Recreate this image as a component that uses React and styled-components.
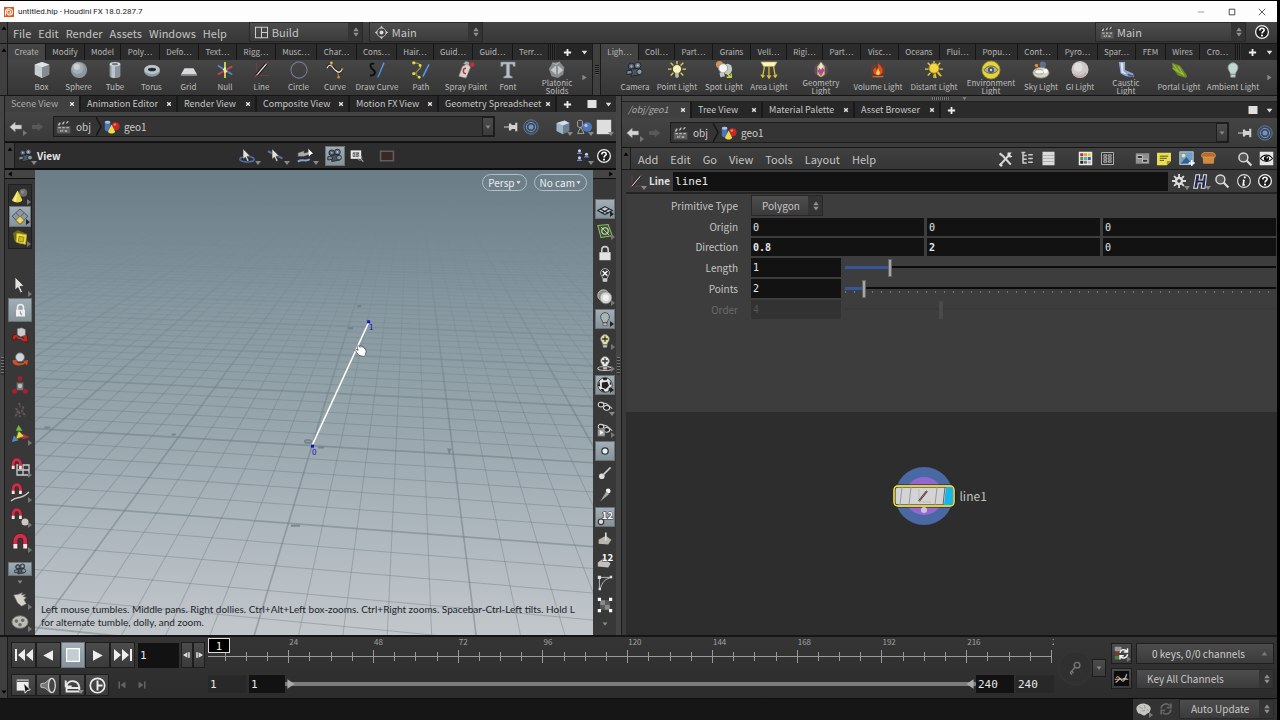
import React from "react";
import styled, { createGlobalStyle, css } from "styled-components";

const ui = `"Noto Sans CJK SC", "Noto Sans", sans-serif`;
const mono = `"DejaVu Sans Mono", "Liberation Mono", monospace`;

const Global = createGlobalStyle`
  *, *::before, *::after { box-sizing: border-box; }
  body { margin: 0; background: #000; }
  button, input, select { font: inherit; color: inherit; margin: 0; padding: 0; border: 0; border-radius: 0; background: none; }
  button, select { cursor: pointer; }
  svg { display: block; }
`;

/* ---------- icons ---------- */

const magnet = (
  <>
    <path d="M4 14V8a4.500 4.500 0 0 1 9 0v6" fill="none" stroke="#5e1420" strokeWidth="5" />
    <path d="M4 12V8a4.500 4.500 0 0 1 9 0v4" fill="none" stroke="#c8304c" strokeWidth="3.600" />
    <path d="M2.200 11h3.600v4H2.200zM11.200 11h3.600v4h-3.600z" fill="#f0e8e8" />
  </>
);
const bulb = (fill, line = "#333") => (
  <>
    <path d="M10 2a5.500 5.500 0 0 0-5.500 5.500C4.500 10.500 7 11.500 7.200 14.500h5.600c.2-3 2.700-4 2.700-7A5.500 5.500 0 0 0 10 2z" fill={fill} stroke={line} />
    <path d="M7.500 15h5v3h-5z" fill="#ccc" stroke={line} strokeWidth=".8" />
  </>
);
const cones = (
  <>
    <path d="M1 4v9c0 3 7 3 7 0V4z" fill="#4a76b8" />
    <ellipse cx="4.500" cy="4" rx="3.500" ry="1.800" fill="#a6c4ea" />
    <circle cx="14.500" cy="9" r="5" fill="#c22a22" />
    <circle cx="13.500" cy="7" r="1.800" fill="#ec7768" />
    <path d="M9.500 7L5 16c1 3 8 3 9 0z" fill="#f2d94c" />
  </>
);
const clapper = (
  <>
    <path d="M1 9h17v9H1z" fill="#5c5c5c" />
    <path d="M1 8V5l16-3 .6 2.400z" fill="#3a3a3a" />
    <path d="M2 8l2-3.500 2 .1L4.500 8zM7 7l2-3.500 2-.3L9.500 6.600zM12 6l2-3.300 2-.3-1.500 3zM3 10h3v1.500H3zM8 10h3v1.500H8zM13 10h3v1.500h-3z" fill="#bbb" />
    <path d="M5 14h2v2H5zM8 13h1v3H8zM11 14h3v2h-3z" fill="#bbb" />
  </>
);
const camera = (
  <>
    <circle cx="6" cy="6" r="3.600" fill="#55606c" stroke="#1c2026" />
    <circle cx="13" cy="5" r="3.600" fill="#6b7682" stroke="#1c2026" />
    <path d="M5 9l10-1 1 7-10 2z" fill="#4a545e" stroke="#1c2026" />
    <circle cx="15" cy="12" r="3" fill="#8b97a4" stroke="#1c2026" />
    <path d="M6 10l-5 1v4l6-1z" fill="#7d8994" stroke="#1c2026" />
    <circle cx="6" cy="6" r="1.200" fill="#aab4be" /><circle cx="13" cy="5" r="1.200" fill="#c2cad2" />
  </>
);
const redHandles = (
  <>
    <path d="M2 10l4-1 3 3-4 2 1 2-5-1zM18 10l-3-2-3 3 2 3-1 3 6 1z" fill="#b82a22" stroke="#5c120e" />
    <path d="M7 13l5 1 3 3" stroke="#d23a30" strokeWidth="1.500" fill="none" />
  </>
);
const help = (
  <>
    <circle cx="10" cy="10" r="8" fill="#1e1e1e" stroke="#ececec" strokeWidth="1.600" />
    <path d="M7.300 8c0-3.600 5.600-3.400 5.400-.3-.1 1.900-2.700 2-2.700 4.200" fill="none" stroke="#fff" strokeWidth="2" />
    <circle cx="10" cy="14.500" r="1.300" fill="#fff" />
  </>
);
const target = (
  <>
    <circle cx="10" cy="10" r="9" fill="#37485f" stroke="#6f819e" />
    <circle cx="10" cy="10" r="5.800" fill="none" stroke="#8298b8" strokeWidth="1.200" />
    <circle cx="10" cy="10" r="2.600" fill="#6d90c4" stroke="#92a8c8" />
  </>
);
const search = (
  <>
    <circle cx="8" cy="8" r="5.600" fill="#565656" stroke="#ddd" strokeWidth="1.800" />
    <path d="M12 12l6 6" stroke="#ddd" strokeWidth="2.600" />
  </>
);
const cursor = <path d="M5 1l9 9-4 .5 2.500 5.500-2 1L8 11.500 5 14z" fill="#e2e2de" stroke="#333" strokeWidth=".8" />;
const lineTool = (
  <>
    <path d="M4 2v14h14" stroke="#7e3c44" fill="none" />
    <path d="M4 16L15 3" stroke="#111" strokeWidth="3.600" />
    <path d="M4 16L15 3" stroke="#e6dada" strokeWidth="1.500" />
    <path d="M2 18l3-4M14 4l3-3" stroke="#b34650" />
  </>
);
const specs = (
  <>
    <ellipse cx="5" cy="7" rx="3.500" ry="3" fill="#222" stroke="#ddd" strokeWidth="1.300" />
    <ellipse cx="12" cy="11" rx="3.800" ry="3" fill="#222" stroke="#ddd" strokeWidth="1.300" />
    <path d="M3 4l9 2 7 6M8 8l1 1" stroke="#ccc" fill="none" strokeWidth="1.300" />
  </>
);
const rays = <path d="M10 0v4M10 15v4M0 9h4M16 9h4M3 2l3 3M17 2l-3 3M3 16l3-3M17 16l-3-3" stroke="#d8cf58" strokeWidth="1.500" />;
const T12 = ({ x, y }) => (
  <text x={x} y={y} fontFamily={ui} fontWeight="700" fontSize="12" fill="#fff" stroke="#333" strokeWidth="1.500" paintOrder="stroke">12</text>
);

const art = {
  box: <><path d="M2 4l8-3 8 3v11l-8 4-8-4z" fill="#a9b0b5" /><path d="M2 4l8 3v12l-8-4z" fill="#c6ccd0" /><path d="M10 7l8-3v11l-8 4z" fill="#848b91" /><path d="M2 4l8-3 8 3-8 3z" fill="#e0e4e7" /></>,
  sphere: <><circle cx="10" cy="10" r="9" fill="#8d969d" /><circle cx="8.500" cy="8" r="6.500" fill="#a5aeb4" /><circle cx="7.500" cy="6.500" r="3.500" fill="#c8ced2" /></>,
  tube: <><path d="M4 3v13c0 4 12 4 12 0V3z" fill="#8b969e" /><path d="M6 4v14q2 1 4 1V4z" fill="#bcc5cb" /><ellipse cx="10" cy="3.500" rx="6" ry="2.500" fill="#d4dade" /><ellipse cx="10" cy="3.500" rx="3.500" ry="1.300" fill="#6d7880" /></>,
  torus: <><ellipse cx="10" cy="11" rx="9" ry="6.500" fill="#8e9ba4" /><ellipse cx="10" cy="9.500" rx="8.500" ry="5" fill="#b9c4ca" /><ellipse cx="10" cy="9.500" rx="4.500" ry="2" fill="#23292d" /></>,
  grid: <><path d="M5 8h10l4 7H1z" fill="#d8dadb" /><path d="M1 15h18v1.500H1z" fill="#8d9295" /></>,
  null: <><path d="M10 1v18" stroke="#d5d84a" strokeWidth="2" /><path d="M2 5l16 10" stroke="#4f86c8" strokeWidth="2.200" /><path d="M18 6L2 15" stroke="#c84440" strokeWidth="2.200" /><path d="M10 7v6M8 9l4 3" stroke="#eef0a0" strokeWidth="2" /></>,
  line: lineTool,
  circle: <circle cx="10" cy="10" r="9" fill="none" stroke="#747c90" strokeWidth="1.200" />,
  curve: <><path d="M1 8c4-8 6 0 9 2s5 5 8-1" fill="none" stroke="#171717" strokeWidth="3" /><path d="M1 8c4-8 6 0 9 2s5 5 8-1" fill="none" stroke="#e9e2cf" strokeWidth="1.500" /><path d="M6 2l1 5M14 18l-1-6" stroke="#b88a3a" /><circle cx="6" cy="2" r="1.500" fill="#d8c14a" /><circle cx="14" cy="18" r="1.500" fill="#d8804a" /><circle cx="18" cy="9" r="1.300" fill="#b88a3a" /></>,
  drawcurve: <><path d="M7 3C0 2 3 8 6 10s2 7-4 6" fill="none" stroke="#0c0c0c" strokeWidth="2" /><path d="M10 18L17 1l2 1-7 16-3 1z" fill="#6f9cd4" stroke="#2d4a73" strokeWidth=".8" /></>,
  path: <><path d="M2 2c9 0 9 5 5 8s-3 6 0 7" fill="none" stroke="#928c4c" strokeWidth="1.400" /><circle cx="2" cy="2" r="1.800" fill="#e4dd38" /><circle cx="9" cy="5" r="1.600" fill="#e4dd38" /><circle cx="2" cy="14" r="1.800" fill="#e4dd38" /><circle cx="8" cy="18" r="1.600" fill="#e4dd38" /><path d="M11 17L18 3l2 1-7 14z" fill="#6f9cd4" stroke="#2d4a73" strokeWidth=".8" /></>,
  spray: <><path d="M6 6l6-3 3 4-5 12-8-2z" fill="#d9d2cc" stroke="#888" strokeWidth=".6" /><path d="M10 8a3 3 0 1 0 0 6" fill="none" stroke="#c63038" strokeWidth="1.600" /><path d="M7 3l3-3 4 2-2 3z" fill="#a8adb0" /><circle cx="17" cy="4" r="2.600" fill="#d02a3a" /></>,
  font: <path d="M2 1h16v5h-2l-1-2.500h-3V16l3 1.500V19H5v-1.500L8 16V3.500H5L4 6H2z" fill="#b6bfc8" stroke="#69737c" strokeWidth=".6" />,
  platonic: <><path d="M5 2l8-1 5 6-1 8-6 4-7-2-3-8z" fill="#888c8f" /><path d="M9 5l-6 5 6 5zM11 5v10l6-5z" fill="#c6c9ca" /><path d="M5 2l4 2 4-3" stroke="#bbb" fill="none" /></>,
  camera,
  pointlight: <>{rays}<circle cx="10" cy="9" r="4.600" fill="#fbf3b4" /><path d="M8 13h4v5H8z" fill="#b8b8a8" /></>,
  spotlight: <><circle cx="5" cy="4" r="4" fill="#d88e54" /><ellipse cx="14" cy="9" rx="5" ry="6" fill="#c4c8ca" /><circle cx="9" cy="8" r="5" fill="#f5f5ee" stroke="#8f9496" /><path d="M5 13l5-1 1 5-5 1z" fill="#c2c5c6" /><path d="M13 13l4 5M18 14v4h-5" stroke="#c9d83c" strokeWidth="1.600" fill="none" /></>,
  arealight: <><path d="M1 1h18l-3 5H4z" fill="#fdf4c0" stroke="#b8a55e" strokeWidth=".7" /><path d="M5 6L3 17M10 6v12M15 6l2 11M1 15l2 3 2-2M8 16l2 3 2-3M15 16l2 2 2-3" stroke="#d8c338" fill="none" strokeWidth="1.400" /></>,
  geolight: <><circle cx="10" cy="10" r="8" fill="#75557b" opacity=".5" /><path d="M10 1l4 5v9l-4 3-4-3V6z" fill="#d8c86c" /><path d="M10 6l4 4-4 7-4-6z" fill="#b04a94" /><path d="M10 1l2 5-2 4-2-3z" fill="#e4e9ee" /></>,
  volumelight: <><circle cx="10" cy="11" r="8" fill="#8b3a20" opacity=".5" /><path d="M10 1c1 4 6 6 5 11 0 5-10 5-10 0-1-3 1-3 2-5 1 1 1 2 1 3 2-2 3-5 2-9z" fill="#e44f1c" /><path d="M10 8c1 3 2 3 2 6 0 2-4 2-4 0 0-3 2-3 2-6z" fill="#fbd75c" /><path d="M4 17h12v1H4z" fill="#f08050" /></>,
  distant: <>{rays}<circle cx="10" cy="8" r="5.500" fill="#f3d544" stroke="#b98d1c" /><path d="M11 14l1 5M14 12l4 5" stroke="#e3bd2a" strokeWidth="2" /></>,
  env: <><circle cx="10" cy="10" r="10" fill="#e4d43c" stroke="#998e22" /><path d="M2 10c4-6 12-6 16 0-4 5-12 5-16 0z" fill="#aeb0a2" stroke="#61603a" /><circle cx="10" cy="10" r="3.400" fill="#4b5358" /><circle cx="10" cy="10" r="1.400" fill="#d0d4d4" /></>,
  sky: <><circle cx="12" cy="4" r="3.500" fill="#5b7288" /><ellipse cx="10" cy="13" rx="9" ry="6" fill="#d5d3c6" stroke="#8d8b76" /><ellipse cx="8" cy="12" rx="5" ry="2.500" fill="#f6f4e2" stroke="#999" /><circle cx="5" cy="5" r="2" fill="#e08a2a" /><circle cx="15" cy="11" r="2.500" fill="#fafafa" /></>,
  gi: <><circle cx="10" cy="9.500" r="9.500" fill="#cbc8c6" /><circle cx="8" cy="7" r="5" fill="#e0dfde" /><path d="M3 15c5 4 11 2 14-2" stroke="#c7a8a5" strokeWidth="2" fill="none" /></>,
  caustic: <><path d="M2 1h7v9l9 4 1 4-9-1-6-3z" fill="#8fa6cf" /><path d="M4 2h3v9l4 4-6-2z" fill="#dbe5f5" /><path d="M12 15l6 2" stroke="#40567d" strokeWidth="2" /></>,
  portal: <><path d="M2 2l9 3 8 11-1 3-9-3-6-8z" fill="#6d8a28" /><path d="M4 4l5 7M9 6l6 9M3 8l13 8" stroke="#9db93e" strokeWidth="1.400" /></>,
  ambient: bulb("#c3d6d2", "#8a9a98"),
  build: <path d="M2 3h16v14H2zM10 3v14M10 10h8" fill="none" stroke="#ccc" strokeWidth="1.400" />,
  radial: <><circle cx="10" cy="10" r="6" fill="none" stroke="#bbb" strokeWidth="1.300" /><circle cx="10" cy="10" r="2.600" fill="#ddd" /><path d="M10 1l2 3H8zM10 19l2-3H8zM1 10l3-2v4zM19 10l-3-2v4z" fill="#ccc" /></>,
  clapper, cones, help, target, search, cursor,
  back: <path d="M1 10l8-7v4h9v6H9v4z" fill="#d4d4d0" stroke="#777" strokeWidth=".7" />,
  fwd: <path d="M19 10l-8-6v3H3v6h8v3z" fill="#585858" />,
  pin: <path d="M0 9.300h7V5h3l1 2h5V4h3v12h-3v-3h-5l-1 2H7v-4.300H0z" fill="#d0d0d0" />,
  cubeBlue: <><path d="M2 5l10-3 6 3v10l-8 4-8-4z" fill="#6d7f90" /><path d="M2 5l8 3v11l-8-4z" fill="#9fb2c4" /><path d="M2 5l10-3 6 3-8 3z" fill="#d2dee8" /></>,
  ghost: <><circle cx="14" cy="10" r="6" fill="#4f78b8" /><circle cx="12.500" cy="8" r="2" fill="#a8c2ea" /><path d="M2 3v6c0 2 6 2 6 0V3c0-2-6-2-6 0zM2 18l4-8 4 8z" fill="none" stroke="#a9a9a9" strokeWidth="1.200" /></>,
  white: <path d="M1 1h18v18H1z" fill="#dedede" />,
  orbit: <><ellipse cx="10" cy="14" rx="9" ry="3.500" fill="none" stroke="#5472ac" strokeWidth="1.800" />{cursor}</>,
  move: <><path d="M0 4l18 9" stroke="#5472ac" strokeWidth="2.600" />{cursor}</>,
  dolly: <><path d="M1 6l8-3v3l8-2v4l-9 3H1z" fill="#aaa" stroke="#333" /><path d="M1 17c6-4 10 1 15-3" stroke="#87a4d8" strokeWidth="2.400" fill="none" /><path d="M14 1l6 6-3 1-2 3z" fill="#fff" /></>,
  zoomWin: <><path d="M1 2h15v12H1z" fill="#ececec" /><path d="M4 5h9v6H4z" fill="#333" /><path d="M5 7h7v2H5zM8 5v6" stroke="#ddd" fill="none" /><circle cx="14" cy="13" r="3" fill="none" stroke="#bbb" /><path d="M16 15l3 3" stroke="#bbb" strokeWidth="1.500" /></>,
  frame: <path d="M2 4h16v12H2z" fill="#3a2826" stroke="#5e5e5e" strokeWidth="2" />,
  people: (
    <>
      <circle cx="5" cy="2.500" r="2.200" fill="#c4d2ee" /><path d="M1 7c1-3 7-3 8 0z" fill="#6a86c4" />
      <circle cx="5" cy="12.500" r="2.200" fill="#c4d2ee" /><path d="M1 17c1-3 7-3 8 0z" fill="#6a86c4" />
      <circle cx="15" cy="7.500" r="2.200" fill="#c4d2ee" /><path d="M11 12c1-3 7-3 8 0z" fill="#6a86c4" />
    </>
  ),
  tools: <><path d="M3 17L14 5M2 3l4 3 10 11" stroke="#d6d6d6" strokeWidth="2.600" fill="none" /><path d="M12 2l5 0-2 3 3 2c-4 3-7 0-6-5z" fill="#e2e2e2" /><path d="M2 16l3 3" stroke="#ddd" strokeWidth="3" /></>,
  tree: <path d="M4 2v14h5M4 6h5M4 11h5M11 5h6M11 10h6M11 15h6M2 2h5" fill="none" stroke="#ccc" strokeWidth="2" />,
  rows: <><path d="M2 1h16v18H2z" fill="#dcdcdc" /><path d="M2 6h16M2 10h16M2 14h16" stroke="#a6a6a6" /></>,
  palette: <><path d="M1 1h18v18H1z" fill="#eee" /><path d="M3 3h4v4H3z" fill="#b02c30" /><path d="M8 3h4v4H8z" fill="#e0a428" /><path d="M13 3h4v4h-4z" fill="#d5cf3a" /><path d="M3 8h4v4H3z" fill="#4b9440" /><path d="M8 8h4v4H8z" fill="#56aad0" /><path d="M13 8h4v4h-4z" fill="#4454a8" /><path d="M3 13h4v4H3z" fill="#222" /><path d="M8 13h4v4H8z" fill="#777" /><path d="M13 13h4v4h-4z" fill="#b8b8b8" /></>,
  gridlist: <path d="M2 2h16v16H2zM5 5h4v2H5zM11 5h4v2h-4zM5 9h4v2H5zM11 9h4v2h-4zM5 13h4v2H5zM11 13h4v2h-4z" fill="#333" stroke="#bdbdbd" strokeWidth="1.200" />,
  netbox: <><path d="M1 3h18v14H1z" fill="#8f8f8f" /><path d="M3 6h7v4H3zM10 11h7v4h-7z" fill="#333" stroke="#ddd" /></>,
  note: <><path d="M0 1h20v12l-6 6H0z" fill="#e8df54" /><path d="M4 6h12M4 9h10M4 12h6" stroke="#4e4a18" strokeWidth="1.300" /><path d="M14 19v-6h6z" fill="#a39b2c" /></>,
  image: <><path d="M1 1h18v17H1z" fill="#6ea0cc" stroke="#d8d8d8" /><circle cx="6" cy="6" r="2.500" fill="#f2e28c" /><path d="M2 17l8-9 6 8z" fill="#35618c" /><path d="M17 12v8M13 16h8" stroke="#fff" strokeWidth="2" /></>,
  basket: <><path d="M2 7h16l-1 10H3z" fill="#d08a3e" /><path d="M1 4l3-2h12l3 2v4H1z" fill="#b56c2c" stroke="#e0a868" strokeWidth=".8" /></>,
  eye: <><path d="M1 1h18v18H1z" fill="#e6e6e6" /><path d="M2 10c4-6 12-6 16 0-4 5-12 5-16 0z" fill="#fff" stroke="#111" strokeWidth="1.500" /><circle cx="10" cy="10" r="3.500" fill="#111" /><circle cx="11" cy="9" r="1" fill="#fff" /></>,
  gear: <><path d="M10 0v20M0 10h20M3 3l14 14M17 3L3 17" stroke="#dcdcdc" strokeWidth="2.600" /><circle cx="10" cy="10" r="6" fill="#dcdcdc" /><circle cx="10" cy="10" r="2.600" fill="#333" /></>,
  hlogo: <path d="M4 1h5L8 8h5l1-7h4l-2 18h-5l1-7H7l-1 7H1z" fill="#20284e" stroke="#e4e4ec" strokeWidth="1.400" />,
  info: <><circle cx="10" cy="10" r="8" fill="#333" stroke="#ddd" strokeWidth="1.400" /><path d="M10 8.500L9 15h2M8.500 9H10" stroke="#fff" strokeWidth="2" fill="none" /><circle cx="11" cy="5.500" r="1.300" fill="#fff" /></>,
  coneSphere: <><circle cx="14" cy="6" r="5" fill="#6e6e6e" /><circle cx="13" cy="5" r="2" fill="#8c8c8c" /><path d="M7 3L0 15c1 4 12 4 13 0z" fill="#e8d64c" /><path d="M7 3L2 16l3 1z" fill="#f8f0a4" /></>,
  diamond: <><path d="M10 0l10 9-10 10L0 9z" fill="#8a96a0" stroke="#444" /><path d="M5 5l9 9M15 5l-9 9" stroke="#555" /><path d="M10 9l5 5-5 5-5-5z" fill="#f0d860" stroke="#7b6b20" /></>,
  yellowBox: <><path d="M1 4l6-4 12 5-1 9-8 4-7-5z" fill="#8a7c14" opacity=".7" /><path d="M6 4l12 2-1 12-12-3z" fill="#efe04a" stroke="#b3a41c" /><path d="M9 8l6 1-1 6-6-1z" fill="#cdb92c" stroke="#877a14" /></>,
  lock: <><path d="M6 10V6a4 4 0 0 1 8 0v4" fill="none" stroke="#eee" strokeWidth="2.200" /><path d="M4 9h12v9H4z" fill="#efefef" /><path d="M10 11v3l2 2" stroke="#999" strokeWidth="1.500" fill="none" /></>,
  handleMove: <>{redHandles}<path d="M7 3l5-1 4 2v6l-5 2-4-2z" fill="#c8ccd0" stroke="#666" strokeWidth=".6" /></>,
  handleRot: <><path d="M2 10c-2 6 8 8 14 4l2 2 1-6-6 1 2 1c-4 3-9 2-9-2z" fill="#d24e28" /><circle cx="10" cy="7" r="5" fill="#cfd4d8" stroke="#666" /></>,
  handleScale: <><path d="M6 7h8v9H6z" fill="#777" stroke="#444" /><circle cx="10" cy="11" r="2.500" fill="#bbb" /><circle cx="10" cy="3" r="2.600" fill="#a81e2a" /><circle cx="4" cy="17" r="2.800" fill="#a81e2a" /><circle cx="16" cy="17" r="2.800" fill="#a81e2a" /></>,
  bones: <path d="M9 2l1 5M5 8l3 3-3 6M14 6l-2 5 4 6M9 12l1 6" stroke="#6a5656" strokeWidth="2" strokeDasharray="3 1" fill="none" />,
  axes: <><path d="M8 0l4 6H5z" fill="#6abf3c" /><path d="M20 13l-8-4v6z" fill="#c4283c" /><path d="M1 18l2-7 5 5z" fill="#4f8ad0" /><path d="M8 6l6 6-9 3z" fill="#e9d84c" stroke="#6f6a28" /></>,
  magGrid: <><path d="M7 8h12v10H7zM13 8v10M7 13h12" fill="none" stroke="#ccc" strokeWidth="1.300" /><g transform="scale(.8)">{magnet}</g></>,
  magCurve: <><path d="M1 19c6-6 9 0 18-9" fill="none" stroke="#ccc" strokeWidth="1.300" /><g transform="scale(.8)">{magnet}</g></>,
  magPoint: <><circle cx="15" cy="15" r="3.500" fill="#ccc8be" /><g transform="scale(.8)">{magnet}</g></>,
  magnet: <g transform="scale(1.150)">{magnet}</g>,
  gloves: <path d="M2 5l6-1 5-2-1 3 5-1-3 3 4 1-3 3 3 5-6 3-5-4-2-4z" fill="#d5d2cb" stroke="#6c6a64" strokeWidth=".8" />,
  film: <><ellipse cx="10" cy="10" rx="9" ry="7" fill="#bdbdb8" stroke="#6f6f6b" /><circle cx="6" cy="9" r="2" fill="#6a6a68" /><circle cx="13" cy="8" r="2" fill="#6a6a68" /><circle cx="10" cy="13" r="2" fill="#6a6a68" /></>,
  refGrid: <><path d="M1 12l9-5 9 5-9 5z" fill="#c6ced2" stroke="#20282c" strokeWidth="1.500" /><path d="M4 10l10 5M6 15l9-5" stroke="#20282c" strokeWidth="1.500" /></>,
  plane: <><path d="M1 3l13-1 5 14-14 2z" fill="#3b5230" stroke="#8cc060" strokeWidth="1.300" /><circle cx="10" cy="10" r="4" fill="none" stroke="#cfe0c8" strokeWidth="1.400" /><path d="M5 5l10 10" stroke="#ddd" /></>,
  padlock: <><path d="M6 9V6a4 4 0 0 1 8 0v3" fill="none" stroke="#ccc" strokeWidth="2" /><path d="M3 9h14v10H3z" fill="#e2e2e0" /></>,
  bulbOff: <>{bulb("#333", "#ccc")}<path d="M7 5l6 6M13 5l-6 6" stroke="#fff" strokeWidth="1.800" /></>,
  discs: <><circle cx="8" cy="8" r="7" fill="#8f8f8d" stroke="#ddd" /><circle cx="11" cy="11" r="7.500" fill="#d2d2ce" stroke="#777" /><circle cx="11" cy="11" r="4" fill="#efefec" /></>,
  bulb: bulb("#a9b5b5", "#3c4446"),
  bulbPlus: <>{bulb("#e4dda0", "#777")}<path d="M10 4v7M6.500 7.500h7" stroke="#333" strokeWidth="1.600" /></>,
  bulbStand: <><ellipse cx="10" cy="17" rx="9" ry="2.500" fill="none" stroke="#ccc" strokeWidth="1.300" />{bulb("#e8e8e4", "#777")}<path d="M10 4v7M6.500 7.500h7" stroke="#333" strokeWidth="1.600" /></>,
  checker: <><circle cx="10" cy="10" r="9" fill="#e6e6e6" stroke="#222" /><path d="M6 7l7-1 2 5-4 4-5-2zM7 1l6 0-1 3H8zM16 4l2 5-2 1zM3 5L1 11l3 1zM4 15l4 0 2 4-3-1zM15 13l3 1-4 4z" fill="#222" /></>,
  specs,
  specsPlay: <>{specs}<path d="M1 10h9v9H1z" fill="#aaa" stroke="#555" /><path d="M4 12l4 2.500L4 17z" fill="#fff" /></>,
  dot: <circle cx="10" cy="10" r="4" fill="#e8f0f6" stroke="#293640" strokeWidth="1.600" />,
  normal: <><circle cx="6" cy="14" r="3.500" fill="#e0e0e0" /><path d="M7 13l10-10" stroke="#ccc" strokeWidth="2" /></>,
  vector: <><circle cx="14" cy="5" r="3" fill="#f2f2f2" /><path d="M12 5l3 4L4 18z" fill="#a8a8a4" /></>,
  pt12: <><circle cx="5" cy="16" r="3.500" fill="#ddd" stroke="#333" strokeWidth="1.500" /><T12 x="6" y="12" /></>,
  primN: <><path d="M2 11l9-5 7 5-4 6-12-1z" fill="#b9b6ae" /><path d="M11 12V2" stroke="#ddd" strokeWidth="2" /></>,
  prim12: <><path d="M1 12l8-6 8 7-3 5-13-1z" fill="#c4c1ba" /><T12 x="6" y="10" /></>,
  corner: <><path d="M3 18V3h15M4 18C6 9 10 5 18 3" fill="none" stroke="#bbb" strokeWidth="1.200" /><path d="M1 1h4v4H1zM16 1h3v3h-3zM2 16h3v3H2z" fill="#ddd" /></>,
  group: <><path d="M4 4h6v6H4zM10 10h6v6h-6z" fill="#8a8a8a" /><path d="M10 4h6v6h-6zM4 10h6v6H4z" fill="#5a5a5a" /><path d="M1 1h4v4H1zM15 1h4v4h-4zM1 15h4v4H1zM15 15h4v4h-4z" fill="#fff" /></>,
  first: <path d="M1 4h2v12H1zM11 4v12L4 10zM19 4v12l-7-6z" fill="#eee" />,
  last: <path d="M19 4h-2v12h2zM9 4v12l7-6zM1 4v12l7-6z" fill="#eee" />,
  rev: <path d="M16 3v14L3 10z" fill="#eee" />,
  stop: <path d="M2 2h16v16H2z" fill="#c2ced2" stroke="#fff" strokeWidth="1.500" />,
  play: <path d="M4 3v14l13-7z" fill="#eee" />,
  stepB: <path d="M11 3v14L0 10zM13 3h4v14h-4z" fill="#ddd" />,
  stepF: <path d="M9 3v14l11-7zM3 3h4v14H3z" fill="#ddd" />,
  nextKey: <path d="M3 3v14l10-7zM14 3h3v14h-3z" fill="#636363" />,
  prevKey: <path d="M17 3v14L7 10zM3 3h3v14H3z" fill="#636363" />,
  winCursor: <><path d="M2 3h14v13H2z" fill="#eee" /><path d="M2 5h14" stroke="#444" strokeWidth="1.500" /><path d="M10 7l8 8-4 1-2 3z" fill="#111" stroke="#fff" /></>,
  speaker: <><path d="M1 8l5-1 6-5v16l-6-5-5-1z" fill="#777" stroke="#ccc" /><ellipse cx="14" cy="10" rx="4" ry="8.500" fill="#444" stroke="#ddd" strokeWidth="1.500" /></>,
  loop: <path d="M3 10c3-8 14-6 15 2M2 4v7h7M3 13v4h15v-4z" fill="none" stroke="#e8e8e8" strokeWidth="2.200" />,
  clock: <><circle cx="10" cy="10" r="8.500" fill="none" stroke="#eee" strokeWidth="2" /><path d="M10 4v12M10 10h6" stroke="#eee" strokeWidth="2.200" fill="none" /></>,
  keyIcon: <><circle cx="13" cy="6" r="4" fill="none" stroke="#777" strokeWidth="2" /><path d="M10 9l-7 8M5 14l3 3M3 17l3 2" stroke="#777" strokeWidth="2" /></>,
  channels: <><path d="M1 1h9v6H1z" fill="#9a9a96" /><path d="M1 8h6v4H1z" fill="#8a3030" /><path d="M1 13h6v5H1z" fill="#4b8040" /><path d="M8 9a5 5 0 0 1 9-2M18 3v5h-5M18 11a5 5 0 0 1-9 3M8 18v-5h5" fill="none" stroke="#f2f2f2" strokeWidth="2" /></>,
  wave: <><path d="M0 0h20v20H0z" fill="#0c0c0c" /><path d="M2 15C5 15 7 8 9 11s4 6 8-7" fill="none" stroke="#7ba6d8" strokeWidth="1.800" /><path d="M1 11h18M3 9c3-4 5 3 8 2s4-3 6 0" fill="none" stroke="#e2b07c" strokeWidth="1.400" /></>,
  brain: <><path d="M2 11c-2-5 4-9 9-8s9 4 7 8c-1 4-3 3-5 5-3 3-5-1-7-1s-3-1-4-4z" fill="#c6c6c2" /><path d="M5 7l4 2M11 5l1 4M8 12l4-1M14 10l2 1" stroke="#90908c" fill="none" /></>,
  refresh: <path d="M3 9a7 7 0 0 1 12-4M17 2v6h-6M17 11a7 7 0 0 1-12 4M3 18v-6h6" fill="none" stroke="#666" strokeWidth="2.400" />,
  logo: <><path d="M0 0h20v20H0z" fill="#d95b1e" /><path d="M3 17V9c1-8 14-7 14 1s-11 8-11 1 7-5 7-1-4 2-4 1" fill="none" stroke="#fff" strokeWidth="2.200" /></>,
  min: <path d="M2 10h16" stroke="#888" strokeWidth="2" />,
  max: <path d="M3 3h14v14H3z" fill="none" stroke="#222" strokeWidth="2" />,
  close: <path d="M2 2l16 16M18 2L2 18" stroke="#333" strokeWidth="2" />,
  x: <path d="M4 4l12 12M16 4L4 16" stroke="#e6e6e6" strokeWidth="4.500" />,
  plus: <path d="M10 2v16M2 10h16" stroke="#eee" strokeWidth="4" />,
  down: <path d="M2 5h16l-8 11z" fill="currentColor" />,
  up: <path d="M2 16h16L10 4z" fill="currentColor" />,
  left: <path d="M16 2v16L4 10z" fill="currentColor" />,
  right: <path d="M4 2v16l12-8z" fill="currentColor" />,
  updown: <path d="M3 8l7-9 7 9zM3 12l7 9 7-9z" fill="#8f8f8f" />,
  pane: <path d="M1 2h18v16H1z" fill="#e0e0e0" />,
};

const Svg = styled.svg`
  flex: none;
  overflow: visible;
  width: ${(p) => p.$s}px;
  height: ${(p) => p.$s}px;
`;
const Icon = ({ n, s = 16 }) => <Svg viewBox="0 0 20 20" $s={s} aria-hidden="true">{art[n]}</Svg>;

/* ---------- shared controls ---------- */

const IconBtn = styled.button`
  position: relative;
  flex: none;
  display: grid;
  place-items: center;
  width: ${(p) => p.$w || 20}px;
  height: ${(p) => p.$h || 20}px;
  color: ${(p) => p.$tint || "#8a8a8a"};
  ${(p) => p.$on && css`background: linear-gradient(#a2aeb6, #87939b); border: 1px solid #69737a;`}
  ${(p) => p.$raised && css`background: linear-gradient(#4c4c4c, #3a3a3a); border: 1px solid #1d1d1d;`}
`;
const More = styled.span`
  position: absolute;
  right: 0;
  bottom: 1px;
  border: 3px solid transparent;
  ${(p) => (p.$down ? css`border-top: 4px solid #888; border-bottom: 0;` : css`border-left: 4px solid ${p.$dark ? "#222" : "#777"}; border-right: 0;`)}
`;
const Tool = ({ n, label, s = 16, more, ...rest }) => (
  <IconBtn type="button" aria-label={label} {...rest}>
    <Icon n={n} s={s} />
    {more && <More $down={more === "down"} $dark={rest.$on} />}
  </IconBtn>
);
const Spacer = styled.div`flex: ${(p) => (p.$w ? `0 0 ${p.$w}px` : "1 1 0")};`;

const Handle = styled.button`
  flex: none;
  width: ${(p) => p.$w || 8}px;
  color: #000;
  background: #3f3f3f;
  border-right: 1px solid #1a1a1a;
  display: flex;
  justify-content: center;
  align-items: ${(p) => (p.$bottom ? "flex-end" : "flex-start")};
  padding: 3px 0;
`;

const Combo = styled.label`
  flex: none;
  display: flex;
  align-items: center;
  gap: ${(p) => p.$gap || 0}px;
  width: ${(p) => p.$w}px;
  height: ${(p) => p.$h || 20}px;
  padding: 0 2px 0 4px;
  background: linear-gradient(90deg, transparent calc(100% - 14px), #343434 calc(100% - 14px)), linear-gradient(#4d4d4d, #3b3b3b);
  border: 1px solid #282828;
  color: #c6c6c6;
  font-size: ${(p) => p.$fs || 11}px;
  select { appearance: none; flex: 1; min-width: 0; line-height: 16px; outline: 0; padding-left: ${(p) => p.$pl || 0}px; }
`;
const ComboBox = ({ icon, value, label, ...rest }) => (
  <Combo {...rest}>
    {icon && <Icon n={icon} s={15} />}
    <select aria-label={label} defaultValue={value}><option>{value}</option></select>
    <Icon n="updown" s={8} />
  </Combo>
);

/* ---------- top chrome ---------- */

const Page = styled.div`
  display: flex;
  flex-direction: column;
  min-height: 100vh;
  padding: 1px 3px 0 0;
  background: #000;
  color: #c4c4c4;
  font-family: ${ui};
  font-size: 11px;
  line-height: 14px;
`;
const TitleBar = styled.header`
  display: flex;
  align-items: center;
  height: 21px;
  padding: 0 0 0 4px;
  gap: 4px;
  background: #fdfdfd;
  color: #222;
  font-family: Roboto, sans-serif;
  font-size: 8px;
`;
const WinButtons = styled.div`
  display: flex;
`;
const MenuBar = styled.nav`
  display: flex;
  align-items: stretch;
  height: 22px;
  background: linear-gradient(#444, #363636);
  border-bottom: 1px solid #181818;
`;
const Menus = styled.div`
  display: flex;
  gap: ${(p) => p.$gap || 0}px;
`;
const MenuItem = styled.button`
  padding: 0 ${(p) => p.$px || 6}px;
  font-size: 11px;
  line-height: 18px;
  color: #c4c4c4;
  white-space: nowrap;
`;
const Shelves = styled.section`
  display: flex;
  background: #363636;
  border-bottom: 1px solid #151515;
`;
const Shelf = styled.div`
  position: relative;
  flex: ${(p) => p.$grow};
  min-width: 0;
  overflow: hidden;
`;
const ShelfTabs = styled.div`
  display: flex;
  height: 16px;
  background: #262626;
`;
const ShelfTab = styled.button`
  flex: 0 0 ${(p) => p.$w}px;
  border-right: 1px solid #151515;
  background: ${(p) => (p.$active ? "#444" : "#2c2c2c")};
  color: #b8b8b8;
  font-size: 8px;
  line-height: 14px;
`;
const Stack = styled.div`
  width: 7px;
  background: repeating-linear-gradient(90deg, #333 0 1px, #161616 1px 2px);
`;
const ShelfTools = styled.div`
  display: flex;
  height: 35px;
  padding-left: ${(p) => p.$pl}px;
  background: linear-gradient(#464646, #353535);
`;
const ShelfTool = styled.button`
  flex: 0 0 ${(p) => p.$w}px;
  display: flex;
  flex-direction: column;
  align-items: center;
  justify-content: flex-start;
  padding-top: 1px;
  color: #bdbdbd;
  font-size: 8px;
  line-height: 8px;
`;
const ToolLabel = styled.span`
  display: flex;
  align-items: center;
  height: 16px;
  text-align: center;
  white-space: pre;
`;
const ShelfMore = styled.span`
  position: absolute;
  right: 4px;
  bottom: 14px;
  color: #8a8a8a;
`;
const Grip = styled.div`
  flex: 0 0 9px;
  background: #3f3f3f;
  border: solid #1a1a1a;
  border-width: 0 1px;
  display: grid;
  place-items: center;
  &::after { content: ""; width: 4px; height: 10px; background: repeating-linear-gradient(#111 0 1px, #555 1px 2px); }
`;

const ShelfSet = ({ grow, tabs, tools, pl }) => (
  <Shelf $grow={grow}>
    <ShelfTabs>
      {tabs.map(([t, w], i) => <ShelfTab key={i} type="button" $w={w} $active={i === 0}>{t}</ShelfTab>)}
      <Stack />
      <Spacer $w={2} />
      <Tool n="plus" s={9} label="Add shelf" $w={18} $h={16} />
      <Tool n="down" s={7} label="Shelf menu" $w={16} $h={16} $tint="#ddd" />
    </ShelfTabs>
    <ShelfTools $pl={pl}>
      {tools.map(([t, n, w]) => (
        <ShelfTool key={t} type="button" $w={w}>
          <Icon n={n} s={18} />
          <ToolLabel>{t}</ToolLabel>
        </ShelfTool>
      ))}
    </ShelfTools>
    <ShelfMore><Icon n="right" s={7} /></ShelfMore>
  </Shelf>
);

const leftTabs = [["Create", 38], ["Modify", 39], ["Model", 36], ["Poly…", 39], ["Defo…", 39], ["Text…", 38], ["Rigg…", 39], ["Musc…", 41], ["Char…", 40], ["Cons…", 40], ["Hair…", 37], ["Guid…", 39], ["Guid…", 40], ["Terr…", 36]];
const leftTools = [["Box", "box", 37], ["Sphere", "sphere", 37], ["Tube", "tube", 36], ["Torus", "torus", 37], ["Grid", "grid", 37], ["Null", "null", 36], ["Line", "line", 37], ["Circle", "circle", 37], ["Curve", "curve", 36], ["Draw Curve", "drawcurve", 48], ["Path", "path", 40], ["Spray Paint", "spray", 50], ["Font", "font", 34], ["Platonic\nSolids", "platonic", 64]];
const rightTabs = [["Ligh…", 38], ["Coll…", 36], ["Part…", 38], ["Grains", 38], ["Vell…", 36], ["Rigi…", 36], ["Part…", 38], ["Visc…", 38], ["Oceans", 41], ["Flui…", 36], ["Popu…", 42], ["Cont…", 40], ["Pyro…", 40], ["Spar…", 38], ["FEM", 30], ["Wires", 34], ["Cro…", 36]];
const rightTools = [["Camera", "camera", 38], ["Point Light", "pointlight", 46], ["Spot Light", "spotlight", 48], ["Area Light", "arealight", 42], ["Geometry\nLight", "geolight", 62], ["Volume Light", "volumelight", 52], ["Distant Light", "distant", 60], ["Environment\nLight", "env", 54], ["Sky Light", "sky", 46], ["GI Light", "gi", 32], ["Caustic\nLight", "caustic", 60], ["Portal Light", "portal", 46], ["Ambient Light", "ambient", 62]];

/* ---------- panes ---------- */

const Workspace = styled.main`
  flex: 1;
  display: flex;
  background: #393939;
`;
const Edge = styled.div`
  flex: 0 0 ${(p) => p.$w}px;
  background: #454545;
  border-right: 1px solid #1c1c1c;
  display: grid;
  place-items: center;
  &::after { content: ""; width: 3px; height: 18px; background: repeating-linear-gradient(#777 0 1px, #333 1px 3px); }
`;
const Pane = styled.section`
  flex: ${(p) => p.$grow};
  min-width: 0;
  display: flex;
  flex-direction: column;
  background: #3a3a3a;
`;
const TabStrip = styled.div`
  display: flex;
  height: 16px;
  background: #2b2b2b;
`;
const PaneTab = styled.div`
  flex: 0 0 ${(p) => p.$w}px;
  display: flex;
  align-items: center;
  justify-content: space-between;
  padding: 0 4px 0 6px;
  border-right: 2px solid #191919;
  background: ${(p) => (p.$active ? "#404040" : "#272727")};
  color: ${(p) => (p.$active ? "#a9a9a9" : "#c6c6c6")};
  font-size: 9px;
  button { line-height: 14px; white-space: nowrap; font-style: ${(p) => (p.$italic ? "italic" : "normal")}; }
`;
const Tabs = ({ items, italic }) => (
  <TabStrip>
    {items.map(([t, w], i) => (
      <PaneTab key={t} $w={w} $active={i === 0} $italic={italic && i === 0}>
        <button type="button">{t}</button>
        <button type="button" aria-label={`Close ${t}`}><Icon n="x" s={6} /></button>
      </PaneTab>
    ))}
    <Tool n="plus" s={9} label="New tab" $w={20} $h={16} />
    <Spacer />
    <Tool n="pane" s={10} label="Maximize pane" $w={16} $h={16} />
    <Tool n="down" s={7} label="Pane menu" $w={16} $h={16} $tint="#ddd" />
  </TabStrip>
);
const PathRow = styled.div`
  display: flex;
  align-items: center;
  height: 30px;
  padding: 0 2px 0 0;
  background: linear-gradient(#444, #3a3a3a);
  border-bottom: 1px solid #161616;
`;
const PathBox = styled.div`
  flex: 1;
  display: flex;
  align-items: center;
  height: 21px;
  margin: 0 6px 0 6px;
  background: #343434;
  border: 1px solid #1c1c1c;
  color: #ccc;
`;
const Crumb = styled.button`
  display: flex;
  align-items: center;
  gap: 4px;
  height: 19px;
  padding: 0 5px 0 2px;
  font-size: 10px;
  line-height: 14px;
`;
const Chevron = () => <svg width="6" height="19" viewBox="0 0 6 19" aria-hidden="true"><path d="M0 0l5 9.500L0 19" fill="none" stroke="#161616" strokeWidth="1.500" /></svg>;
const Path = ({ children }) => (
  <PathRow>
    <Tool n="back" s={14} label="Back" more="right" $w={22} />
    <Tool n="fwd" s={14} label="Forward" $w={20} />
    <PathBox>
      <Crumb type="button"><Icon n="clapper" s={16} />obj</Crumb>
      <Chevron />
      <Crumb type="button"><Icon n="cones" s={16} />geo1</Crumb>
      <Spacer />
      <Tool n="down" s={6} label="Path history" $w={12} $h={19} $raised />
    </PathBox>
    {children}
  </PathRow>
);

const ViewRow = styled.div`
  display: flex;
  height: 28px;
  background: #2d2d2d;
  border: solid #0d0d0d;
  border-width: 1px 0 2px;
  align-items: center;
  padding-right: 2px;
  ${Handle} { align-self: stretch; }
`;
const ViewName = styled.strong`
  font-size: 10px;
  color: #e4e4e4;
  width: 180px;
`;
const ViewBody = styled.div`
  flex: 1;
  display: flex;
`;
const Toolbar = styled.div`
  flex: 0 0 ${(p) => p.$w}px;
  display: flex;
  flex-direction: column;
  align-items: center;
  gap: ${(p) => p.$gap || 0}px;
  background: #383838;
`;
const ToolbarTop = styled.button`
  align-self: stretch;
  display: flex;
  justify-content: ${(p) => (p.$right ? "flex-end" : "flex-start")};
  align-items: center;
  height: 9px;
  padding: 0 2px;
  color: #000;
  background: #444;
  border-bottom: 1px solid #111;
`;
const ModeGroup = styled.div`
  display: flex;
  flex-direction: column;
  margin: 5px 0 24px;
  border: 1px solid #202020;
  background: #2f2f2f;
`;

const Viewport = styled.div`
  position: relative;
  flex: 1;
  min-width: 0;
  background: linear-gradient(#6a7d86, #8597a0 28%, #97a6ac 55%, #aeb7be 78%, #c2c7cb);
`;
const Scene = styled.svg`
  position: absolute;
  inset: 0;
  width: 100%;
  height: 100%;
`;
const CamBar = styled.div`
  position: absolute;
  top: 4px;
  right: 6px;
  display: flex;
  gap: 7px;
`;
const CamBtn = styled.button`
  height: 17px;
  padding: 0 5px;
  border: 1px solid #b4bec4;
  border-radius: 9px;
  background: #6d7f89;
  color: #eee;
  font-size: 10px;
  line-height: 14px;
  display: flex;
  align-items: center;
  gap: 1px;
`;
const Hint = styled.p`
  position: absolute;
  left: 6px;
  right: 4px;
  bottom: 6px;
  margin: 0;
  color: #20262b;
  font-family: Lato, sans-serif;
  font-size: 10px;
  line-height: 13px;
`;

/* The ground plane is projected from grid units through two vanishing points. */
const project = (depth, side) => {
  const a = depth * 0.1925;
  const b = side * -0.02736;
  const w = 1 + a + b;
  return [(312 + 411 * a - 4700 * b) / w, (445 + 120 * a + 139 * b) / w];
};
const gridLines = () => {
  const out = [];
  for (let i = -80; i <= 125; i++) {
    const [x1, y1] = project(-3, i / 5);
    const [x2, y2] = project(24, i / 5);
    out.push({ k: `s${i}`, x1, y1, x2, y2, major: i % 5 === 0, o: 1 });
  }
  for (let i = -18; i <= 100; i++) {
    const [x1, y1] = project(i / 5, i < 0 ? -8 : -25);
    const [x2, y2] = project(i / 5, i < 0 ? 6 : 18);
    out.push({ k: `d${i}`, x1, y1, x2, y2, major: i % 5 === 0, o: i > 40 ? 0.5 : 1 });
  }
  return out;
};

const ViewScene = () => (
  <Scene viewBox="35 170 558 464" preserveAspectRatio="xMidYMid slice" role="img" aria-label="Perspective view with a line from point 0 to point 1">
    <defs>
      <linearGradient id="fade" gradientUnits="userSpaceOnUse" x1="0" y1="200" x2="0" y2="420">
        <stop offset="0" stopColor="#fff" stopOpacity="0" />
        <stop offset="0.450" stopColor="#fff" stopOpacity="0.360" />
        <stop offset="1" stopColor="#fff" stopOpacity="0.900" />
      </linearGradient>
      <mask id="ground" maskUnits="userSpaceOnUse" x="35" y="170" width="558" height="464">
        <rect x="35" y="170" width="558" height="464" fill="url(#fade)" />
      </mask>
    </defs>
    <g mask="url(#ground)" stroke="#66757c">
      {gridLines().map((l) => (
        <line key={l.k} x1={l.x1} y1={l.y1} x2={l.x2} y2={l.y2} strokeWidth={l.major ? 1.7 : 1} strokeOpacity={(l.major ? 0.5 : 0.42) * l.o} />
      ))}
    </g>
    <g stroke="#66767e" strokeWidth="2" opacity=".7">
      <path d="M447 449h4M449 449v4M291 525h9M318 447h6M172 434h4M45 427h6M348 328h5M357 306h4" />
      <ellipse cx="308" cy="441" rx="3" ry="1.500" fill="none" />
    </g>
    <path d="M312 445L369 321" stroke="#fff" strokeWidth="1.500" />
    <g fill="#1212c0" fontFamily={ui} fontSize="8">
      <rect x="311" y="444" width="3" height="3" />
      <rect x="367" y="320" width="3" height="3" />
      <text x="312" y="454">0</text>
      <text x="369" y="330">1</text>
    </g>
    <path d="M359 355l-4-5 1-1 2 1-1-4 1-1 2 2v-2h1l1 2 1-1 1 2h1l1 3-1 4-1 1z" fill="#fff" stroke="#333" strokeWidth=".6" />
  </Scene>
);

const rightBar = [["refGrid", "Reference plane", 1, "right"], ["plane", "Construction plane", 0, "right"], ["padlock", "Lock camera"], ["bulbOff", "No lighting"], ["discs", "Material shading", 0, "right"], ["bulb", "Headlight", 1, "right"], ["bulbPlus", "Normal lighting", 0, "right"], ["bulbStand", "High quality lighting", 0, "right"], ["checker", "Shaded mode", 1, "right"], ["specs", "Ghost objects", 0, "down"], ["specsPlay", "Object visibility", 0, "right"], ["dot", "Display points", 1], ["normal", "Point normals"], ["vector", "Point trails"], ["pt12", "Point numbers", 1], ["primN", "Primitive normals"], ["prim12", "Primitive numbers"], ["corner", "Hulls"], ["group", "Group display"]];

/* ---------- parameters ---------- */

const TopStrip = styled.div`
  display: flex;
  align-items: center;
  justify-content: center;
  gap: 12px;
  height: 6px;
  color: #888;
  background: #444;
  border-bottom: 1px solid #222;
  &::before { content: ""; width: 18px; height: 3px; background: repeating-linear-gradient(90deg, #777 0 1px, #333 1px 2px); }
`;
const NetMenu = styled.div`
  display: flex;
  align-items: center;
  height: 22px;
  background: linear-gradient(#404040, #363636);
  border-bottom: 1px solid #171717;
  ${Handle} { align-self: stretch; }
`;
const NodeHead = styled.div`
  display: flex;
  align-items: center;
  height: 24px;
  margin-left: 4px;
  padding-right: 1px;
  border-bottom: 2px solid #232323;
  color: #e0e0e0;
  label { font-weight: 700; font-size: 10px; padding: 0 3px 0 2px; }
`;
const Field = styled.input`
  flex: 1;
  min-width: 0;
  width: 100%;
  height: ${(p) => p.$h || 18}px;
  padding: 0 2px;
  background: ${(p) => (p.disabled ? "#323232" : p.$dim ? "#282828" : "#121212")};
  color: ${(p) => (p.disabled ? "#555" : "#e8e8e8")};
  font-family: ${mono};
  font-size: ${(p) => p.$fs || 10}px;
  font-weight: ${(p) => (p.$bold ? 700 : 400)};
  outline: 0;
`;
const Params = styled.div`
  flex: 0 0 218px;
  margin-left: 4px;
  padding: 1px 1px 0 0;
  display: flex;
  flex-direction: column;
  gap: 2px;
  background: #3d3d3d;
`;
const Row = styled.div`
  display: grid;
  grid-template-columns: 112px 1fr;
  column-gap: 13px;
  align-items: center;
  min-height: ${(p) => p.$h || 19}px;
  font-size: 10px;
  color: ${(p) => (p.$off ? "#6a6a6a" : "#c4c4c4")};
  > label, > span { text-align: right; }
`;
const Triple = styled.div`
  display: grid;
  grid-template-columns: repeat(3, 1fr);
  gap: 3px;
`;
const Pair = styled.div`
  display: grid;
  grid-template-columns: 90px 1fr;
  gap: 4px;
  align-items: center;
`;
const Range = styled.input`
  appearance: none;
  width: 100%;
  height: 19px;
  background:
    ${(p) => (p.$ticks ? "repeating-linear-gradient(90deg, #777 0 1px, transparent 1px 9px) 0 12px / 100% 2px no-repeat," : "")}
    linear-gradient(#34579c, #34579c) 0 8px / ${(p) => (p.disabled ? 0 : p.$fill)}% 3px no-repeat,
    linear-gradient(${(p) => (p.disabled ? "#393939, #393939" : "#0c0c0c, #0c0c0c")}) 0 8px / 100% 2px no-repeat;
  &::-webkit-slider-thumb {
    appearance: none;
    width: 4px;
    height: 18px;
    background: ${(p) => (p.disabled ? "#4c4c4c" : "#a6a6a6")};
    border: 1px solid ${(p) => (p.disabled ? "#484848" : "#666")};
  }
`;
const SliderRow = ({ name, value, pos, ticks, off }) => (
  <Row $off={off}>
    <label htmlFor={name}>{name}</label>
    <Pair>
      <Field id={name} defaultValue={value} disabled={off} $h={19} />
      <Range type="range" aria-label={`${name} slider`} min="0" max="100" defaultValue={pos} disabled={off} $fill={pos} $ticks={ticks} />
    </Pair>
  </Row>
);
const VecRow = ({ name, values }) => (
  <Row $h={18}>
    <span>{name}</span>
    <Triple>
      {values.map((v, i) => <Field key={i} aria-label={`${name} ${"XYZ"[i]}`} defaultValue={v} $bold={v !== "0"} />)}
    </Triple>
  </Row>
);
const Network = styled.div`
  position: relative;
  flex: 1;
  min-height: 120px;
  margin-left: 4px;
  background: #2d2d2d;
`;
const Node = styled.div`
  position: absolute;
  left: 46%;
  top: 84px;
  margin: -30px 0 0 -32px;
  display: flex;
  align-items: center;
  gap: 3px;
  font-size: 12px;
  color: #c0c0c0;
`;

/* ---------- playbar ---------- */

const Playbar = styled.footer`
  display: flex;
  height: 64px;
  background: linear-gradient(#353535, #2c2c2c);
  border-top: 2px solid #151515;
  border-bottom: 1px solid #0d0d0d;
`;
const Col = styled.div`
  display: flex;
  flex-direction: column;
  gap: ${(p) => p.$gap || 0}px;
  flex: ${(p) => (p.$grow ? "1 1 0" : "none")};
  min-width: 0;
  padding: ${(p) => p.$pad || "0"};
`;
const Line = styled.div`
  display: flex;
  align-items: center;
`;
const Timeline = styled.div`
  position: relative;
  display: flex;
  height: 33px;
  padding-right: 2px;
  overflow: hidden;
`;
const Cell = styled.div`
  position: relative;
  flex: ${(p) => p.$frames} 1 0;
  border-bottom: 1px solid #999;
  height: 20px;
  &::after { content: ""; position: absolute; right: 0; bottom: ${(p) => (p.$major ? -7 : -5)}px; width: 1px; height: ${(p) => (p.$major ? 13 : 9)}px; background: #999; }
  span { position: absolute; left: 100%; top: 0; font-size: 8px; line-height: 10px; color: #a0a0a0; }
`;
const Flag = styled.div`
  position: absolute;
  left: 0;
  top: 1px;
  width: 22px;
  height: 15px;
  padding-left: 7px;
  border: 1px solid #ddd;
  background: #000;
  color: #fff;
  font-size: 11px;
  line-height: 13px;
`;
const RangeTrack = styled.div`
  flex: 1;
  height: 4px;
  background: #7c7c7c;
  display: flex;
  justify-content: space-between;
  align-items: center;
  color: #aaa;
`;
const Box = styled.div`
  width: ${(p) => p.$w}px;
  margin-right: ${(p) => p.$mr || 0}px;
  display: flex;
`;
const KeyBtn = styled.button`
  width: 34px;
  height: 34px;
  border-radius: 50%;
  background: #303030;
  border: 1px solid #373737;
  display: grid;
  place-items: center;
`;
const KeysButton = styled.button`
  display: flex;
  align-items: center;
  width: 138px;
  height: 21px;
  padding: 0 5px 0 15px;
  justify-content: space-between;
  background: linear-gradient(#4c4c4c, #3b3b3b);
  border: 1px solid #1e1e1e;
  font-size: 10px;
  color: #ccc;
  svg { color: #777; }
`;
const Status = styled.div`
  display: flex;
  justify-content: flex-end;
  align-items: flex-start;
  gap: 3px;
  height: 21px;
  padding-right: 3px;
  background: linear-gradient(90deg, #161616 calc(100% - 144px), #333 calc(100% - 144px));
`;

const timelineFrames = Array.from({ length: 40 }, (_, i) => (i + 1) * 6);

export default function App() {
  return (
    <Page>
      <Global />
      <TitleBar>
        <Icon n="logo" s={10} />
        <span>untitled.hip - Houdini FX 18.0.287.7</span>
        <Spacer />
        <WinButtons>
          <Tool n="min" s={8} label="Minimize" $w={30} />
          <Tool n="max" s={8} label="Maximize" $w={31} />
          <Tool n="close" s={8} label="Close" $w={30} />
        </WinButtons>
      </TitleBar>

      <MenuBar>
        <Handle type="button" aria-label="Collapse menu bar"><Icon n="up" s={6} /></Handle>
        <Spacer $w={2} />
        <Menus $gap={1}>
          {["File", "Edit", "Render", "Assets", "Windows", "Help"].map((m) => <MenuItem key={m} type="button" $px={3}>{m}</MenuItem>)}
        </Menus>
        <Spacer $w={19} />
        <ComboBox icon="build" value="Build" label="Desktop" $w={114} $gap={3} />
        <Spacer $w={6} />
        <ComboBox icon="radial" value="Main" label="Radial menu" $w={114} $gap={3} />
        <Spacer />
        <ComboBox icon="clapper" value="Main" label="Take" $w={151} $gap={2} />
        <Spacer $w={6} />
        <Tool n="help" s={16} label="Help" />
        <Spacer $w={5} />
      </MenuBar>

      <Shelves>
        <Handle type="button" aria-label="Collapse shelf"><Icon n="up" s={6} /></Handle>
        <ShelfSet grow={584} tabs={leftTabs} tools={leftTools} pl={15} />
        <Grip />
        <ShelfSet grow={676} tabs={rightTabs} tools={rightTools} pl={15} />
      </Shelves>

      <Workspace>
        <Edge $w={5} />
        <Pane $grow={611}>
          <Tabs items={[["Scene View", 76], ["Animation Editor", 97], ["Render View", 79], ["Composite View", 93], ["Motion FX View", 89], ["Geometry Spreadsheet", 118]]} />
          <Path>
            <Tool n="pin" s={14} label="Pin" />
            <Tool n="target" s={16} label="Link" />
            <Spacer $w={11} />
            <Tool n="cubeBlue" label="Shading" more="down" $w={21} />
            <Tool n="ghost" label="Ghost" more="down" $w={21} />
            <Tool n="white" s={16} label="Background" more="down" />
          </Path>
          <ViewRow>
            <Handle type="button" $w={10} aria-label="Collapse view bar"><Icon n="up" s={6} /></Handle>
            <Tool n="camera" label="View tool" more="down" $w={22} />
            <ViewName>View</ViewName>
            <Spacer $w={15} />
            <Tool n="orbit" label="Tumble" more="down" $w={29} />
            <Tool n="move" label="Pan" more="down" $w={29} />
            <Tool n="dolly" label="Dolly" more="down" $w={29} />
            <Spacer $w={6} />
            <Tool n="camera" label="Camera" $on />
            <Tool n="zoomWin" s={14} label="Zoom window" $w={23} />
            <Spacer $w={8} />
            <Tool n="frame" label="Render region" $w={22} />
            <Spacer />
            <Tool n="people" s={14} label="Display sets" more="down" $w={22} />
            <Tool n="help" s={16} label="View help" />
          </ViewRow>
          <ViewBody>
            <Toolbar $w={30}>
              <ToolbarTop type="button" aria-label="Collapse left toolbar"><Icon n="left" s={6} /></ToolbarTop>
              <ModeGroup>
                <Tool n="coneSphere" label="Object selection" more="right" $w={22} $h={21} />
                <Tool n="diamond" label="Component selection" more="right" $w={22} $h={21} $on />
                <Tool n="yellowBox" label="Dynamics selection" more="right" $w={22} $h={21} />
              </ModeGroup>
              <Tool n="cursor" s={20} label="Select" more="right" $w={24} $h={25} />
              <Tool n="lock" s={15} label="Secure selection" $on $w={24} $h={24} />
              <Tool n="handleMove" s={18} label="Move" $w={24} $h={25} />
              <Tool n="handleRot" s={18} label="Rotate" $w={24} $h={25} />
              <Tool n="handleScale" s={18} label="Scale" $w={24} $h={25} />
              <Tool n="bones" s={18} label="Pose" $w={24} $h={25} />
              <Tool n="axes" s={19} label="Handles" more="right" $w={24} $h={25} />
              <Spacer $w={7} />
              <Tool n="magGrid" s={20} label="Grid snapping" more="right" $w={24} $h={25} />
              <Tool n="magCurve" s={20} label="Curve snapping" more="right" $w={24} $h={25} />
              <Tool n="magPoint" s={20} label="Point snapping" more="right" $w={24} $h={25} />
              <Tool n="magnet" s={19} label="Multi snapping" more="right" $w={24} $h={25} />
              <Spacer $w={8} />
              <Tool n="camera" s={13} label="View" $on $w={24} $h={14} />
              <Tool n="down" s={6} label="More tools" $w={24} $h={11} />
              <Tool n="gloves" s={16} label="Brush" more="right" $w={24} $h={24} />
              <Tool n="film" s={18} label="Flipbook" more="right" $w={24} $h={22} />
            </Toolbar>
            <Viewport>
              <ViewScene />
              <CamBar>
                <CamBtn type="button">Persp<Icon n="down" s={5} /></CamBtn>
                <CamBtn type="button">No cam<Icon n="down" s={5} /></CamBtn>
              </CamBar>
              <Hint>Left mouse tumbles. Middle pans. Right dollies. Ctrl+Alt+Left box-zooms. Ctrl+Right zooms. Spacebar-Ctrl-Left tilts. Hold L<br />for alternate tumble, dolly, and zoom.</Hint>
            </Viewport>
            <Toolbar $w={23} $gap={2}>
              <ToolbarTop type="button" $right aria-label="Collapse right toolbar"><Icon n="right" s={6} /></ToolbarTop>
              <Spacer $w={16} />
              {rightBar.map(([n, label, on, more]) => (
                <Tool key={n} n={n} s={16} label={label} $on={!!on} more={more} />
              ))}
              <Tool n="down" s={6} label="More display options" $h={14} />
            </Toolbar>
          </ViewBody>
        </Pane>
        <Edge $w={6} />
        <Pane $grow={655}>
          <TopStrip><Icon n="down" s={5} /></TopStrip>
          <Tabs italic items={[["/obj/geo1", 70], ["Tree View", 71], ["Material Palette", 92], ["Asset Browser", 86]]} />
          <Path>
            <Tool n="pin" s={14} label="Pin" />
            <Tool n="target" s={16} label="Link" />
          </Path>
          <NetMenu>
            <Handle type="button" $w={9} aria-label="Collapse network menu"><Icon n="up" s={6} /></Handle>
            <Spacer $w={1} />
            <Menus>
              {["Add", "Edit", "Go", "View", "Tools", "Layout", "Help"].map((m) => <MenuItem key={m} type="button">{m}</MenuItem>)}
            </Menus>
            <Spacer />
            <Tool n="tools" label="Tools" $w={22} />
            <Tool n="tree" s={15} label="Tree" $w={21} />
            <Tool n="rows" s={15} label="List" $w={21} />
            <Spacer $w={15} />
            <Tool n="palette" s={15} label="Palette" $w={22} />
            <Tool n="gridlist" s={15} label="Shapes" $w={22} />
            <Spacer $w={14} />
            <Tool n="netbox" s={15} label="Network box" $w={21} />
            <Tool n="note" s={14} label="Sticky note" $w={22} />
            <Tool n="image" s={15} label="Background image" $w={22} />
            <Tool n="basket" s={15} label="Dependencies" $w={22} />
            <Spacer $w={15} />
            <Tool n="search" s={16} label="Find" $w={21} />
            <Tool n="eye" s={15} label="Display" $w={22} />
          </NetMenu>
          <NodeHead>
            <Tool n="line" s={15} label="Node menu" more="down" $w={21} />
            <label htmlFor="node-name">Line</label>
            <Field id="node-name" defaultValue="line1" $h={19} $fs={11} />
            <Tool n="gear" s={14} label="Parameter options" more="down" $w={22} />
            <Tool n="hlogo" s={15} label="Node info" more="down" $w={21} />
            <Tool n="search" s={16} label="Search parameters" $w={22} />
            <Tool n="info" s={16} label="Info" $w={21} />
            <Tool n="help" s={16} label="Node help" $w={22} />
          </NodeHead>
          <Params>
            <Row $h={21}>
              <span>Primitive Type</span>
              <ComboBox value="Polygon" label="Primitive Type" $w={72} $h={21} $fs={10} $pl={6} />
            </Row>
            <VecRow name="Origin" values={["0", "0", "0"]} />
            <VecRow name="Direction" values={["0.8", "2", "0"]} />
            <SliderRow name="Length" value="1" pos={10} />
            <SliderRow name="Points" value="2" pos={4} ticks />
            <SliderRow name="Order" value="4" pos={22} off />
          </Params>
          <Network>
            <Node>
              <svg width="63" height="60" viewBox="0 0 63 60" aria-hidden="true">
                <circle cx="31" cy="30" r="29" fill="#4a68a4" />
                <circle cx="31" cy="30" r="19" fill="#9168cc" />
                <rect x="1" y="20" width="60" height="20" rx="4" fill="#d4d4d6" stroke="#1d1d10" strokeWidth="3" />
                <path d="M53 21h5q2 0 2 2v14q0 2-2 2h-7z" fill="#18b4ec" />
                <path d="M9 21L7 39M18 21l-2 18M44 21l-2 18" stroke="#999" />
                <path d="M52 21l-2 18" stroke="#666" />
                <path d="M26 23v13h12" stroke="#bbb" fill="none" />
                <path d="M26 35l8-10" stroke="#222" strokeWidth="2" />
                <path d="M26 35l8-10" stroke="#d88" strokeWidth=".8" />
                <rect x="1" y="20" width="60" height="20" rx="4" fill="none" stroke="#e0cf3c" strokeWidth="1.800" />
                <circle cx="31" cy="44" r="3" fill="#cdc4dc" />
              </svg>
              <span>line1</span>
            </Node>
          </Network>
        </Pane>
      </Workspace>

      <Playbar>
        <Handle type="button" $bottom aria-label="Collapse playbar"><Icon n="down" s={6} /></Handle>
        <Col $gap={6} $pad="5px 0 0 3px">
          <Line>
            <Tool n="first" s={20} label="First frame" $raised $w={25} $h={26} />
            <Tool n="rev" s={15} label="Play backward" $raised $w={25} $h={26} />
            <Tool n="stop" s={16} label="Stop" $on $w={24} $h={26} />
            <Tool n="play" s={15} label="Play" $raised $w={25} $h={26} />
            <Tool n="last" s={20} label="Last frame" $raised $w={25} $h={26} />
            <Spacer $w={3} />
            <Box $w={41} $mr={2}><Field aria-label="Current frame" defaultValue="1" $h={25} $fs={11} /></Box>
            <Tool n="stepB" s={8} label="Step back" $raised $w={12} $h={26} />
            <Tool n="stepF" s={8} label="Step forward" $raised $w={12} $h={26} />
          </Line>
          <Line>
            <Tool n="winCursor" s={17} label="Scrub mode" $raised $w={25} $h={22} />
            <Tool n="speaker" s={17} label="Audio" $raised $w={24} $h={22} />
            <Tool n="loop" s={17} label="Loop" more="down" $raised $w={25} $h={22} />
            <Tool n="clock" s={17} label="Real time" $raised $w={24} $h={22} />
            <Spacer $w={3} />
            <Tool n="prevKey" s={10} label="Previous key" $w={20} $h={22} />
            <Tool n="nextKey" s={10} label="Next key" $w={20} $h={22} />
          </Line>
        </Col>
        <Col $grow $gap={5} $pad="0 0 0 3px">
          <Timeline>
            {timelineFrames.map((f) => (
              <Cell key={f} $frames={f === 6 ? 5 : 6} $major={f % 24 === 0}>{f % 24 === 0 && <span>{f}</span>}</Cell>
            ))}
            <Flag>1</Flag>
          </Timeline>
          <Line>
            <Box $w={38} $mr={3}><Field aria-label="Global start frame" defaultValue="1" $h={18} $fs={11} $dim /></Box>
            <Box $w={36}><Field aria-label="Start frame" defaultValue="1" $h={18} $fs={11} /></Box>
            <RangeTrack><Icon n="right" s={12} /><Icon n="left" s={12} /></RangeTrack>
            <Box $w={38} $mr={2}><Field aria-label="End frame" defaultValue="240" $h={18} $fs={11} /></Box>
            <Box $w={38}><Field aria-label="Global end frame" defaultValue="240" $h={18} $fs={11} $dim /></Box>
          </Line>
        </Col>
        <Line>
          <Spacer $w={4} />
          <KeyBtn type="button" aria-label="Set keyframe"><Icon n="keyIcon" s={14} /></KeyBtn>
          <Tool n="down" s={6} label="Keyframe menu" $raised $w={14} $h={18} />
        </Line>
        <Col $gap={4} $pad="6px 3px 0 5px">
          <Line>
            <Tool n="channels" s={15} label="Channel list" more="right" $raised $w={21} $h={21} />
            <Spacer $w={4} />
            <KeysButton type="button">0 keys, 0/0 channels<Icon n="up" s={7} /></KeysButton>
          </Line>
          <Line>
            <Tool n="wave" s={15} label="Animation curves" $raised $w={21} $h={21} />
            <Spacer $w={4} />
            <ComboBox value="Key All Channels" label="Key mode" $w={138} $fs={10} $pl={6} />
          </Line>
        </Col>
      </Playbar>
      <Status>
        <Tool n="brain" s={17} label="Cook status" more="right" />
        <Tool n="refresh" s={14} label="Recook" />
        <ComboBox value="Auto Update" label="Update mode" $w={95} $fs={10} $pl={7} />
      </Status>
    </Page>
  );
}
